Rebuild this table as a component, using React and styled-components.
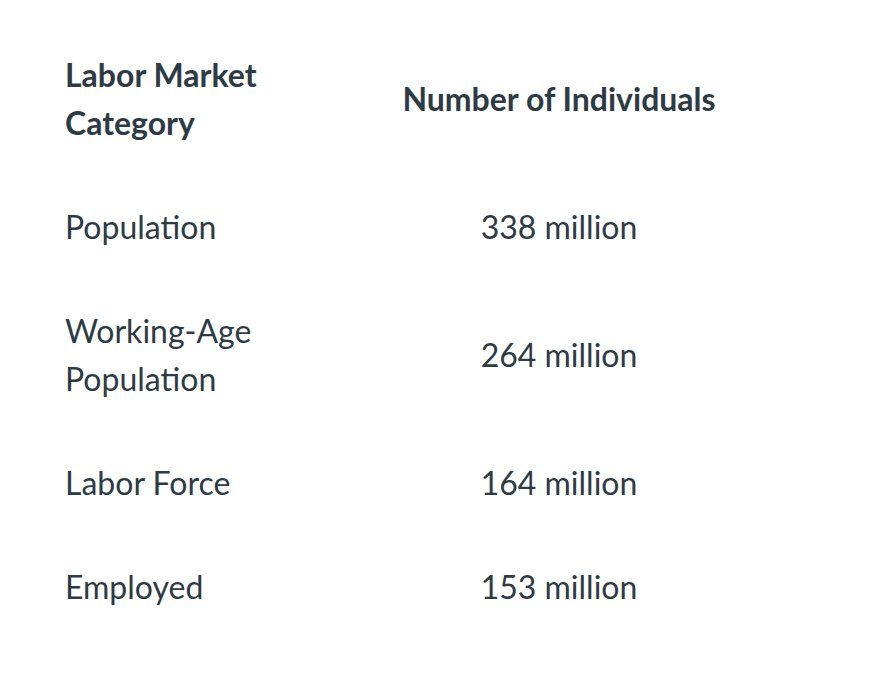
import React from 'react';
import styled, { createGlobalStyle } from 'styled-components';

const GlobalStyle = createGlobalStyle`
  html, body {
    margin: 0;
    padding: 0;
    background: #ffffff;
  }
  body {
    font-family: Lato, "Open Sans", sans-serif;
    color: #2d3b45;
  }
`;

const Page = styled.div`
  padding: 23px 0 0 37px;
`;

const Table = styled.table`
  border-collapse: collapse;
  font-size: 32px;
  line-height: 48px;
`;

const HeadCell = styled.th`
  padding: 28px;
  font-weight: 700;
  text-align: ${(p) => p.$align || 'left'};
  vertical-align: middle;
  width: ${(p) => p.$width}px;
`;

const Cell = styled.td`
  padding: 28px;
  font-weight: 400;
  text-align: ${(p) => p.$align || 'left'};
  vertical-align: middle;
`;

const rows = [
  ['Population', '338 million'],
  ['Working-Age Population', '264 million'],
  ['Labor Force', '164 million'],
  ['Employed', '153 million'],
];

export default function App() {
  return (
    <>
      <GlobalStyle />
      <Page>
        <Table>
          <thead>
            <tr>
              <HeadCell $width={278}>Labor Market Category</HeadCell>
              <HeadCell $width={320} $align="center">Number of Individuals</HeadCell>
            </tr>
          </thead>
          <tbody>
            {rows.map(([label, value]) => (
              <tr key={label}>
                <Cell>{label}</Cell>
                <Cell $align="center">{value}</Cell>
              </tr>
            ))}
          </tbody>
        </Table>
      </Page>
    </>
  );
}
